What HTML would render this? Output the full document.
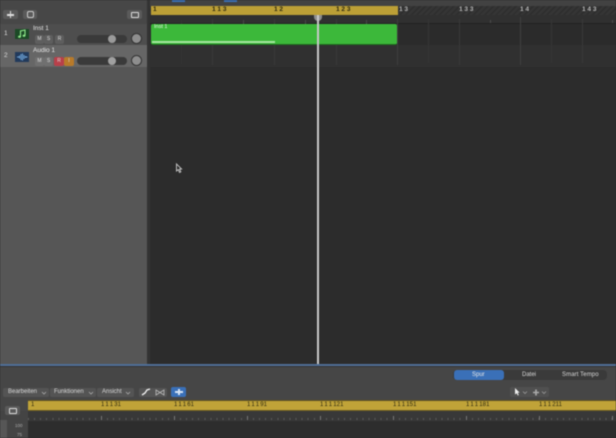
<!DOCTYPE html>
<html><head><meta charset="utf-8">
<style>
html,body{margin:0;padding:0;background:#2b2b2b}
#p{position:relative;width:616px;height:438px;overflow:hidden;background:#2c2c2c;font-family:"Liberation Sans",sans-serif;filter:blur(.45px)}
#p div{position:absolute;box-sizing:border-box}
.t{white-space:nowrap;line-height:1}
.rl{font-size:6.5px;color:#2e2a10;letter-spacing:.3px;word-spacing:-.6px;font-weight:bold}
.rd{font-size:6.5px;color:#b5b5b5;letter-spacing:.3px;word-spacing:-.6px;font-weight:bold}
.rb{font-size:6px;color:#2e2a10;letter-spacing:.1px;word-spacing:-.8px;top:402px}
.b{background:#5e5e5e;border-radius:2px;color:#ddd;font-size:5px;text-align:center;line-height:9px;height:9px}
.m{font-size:6px;color:#d8d8d8}
svg{position:absolute}
</style></head><body>
<div id="p">
<!-- left panel -->
<div style="left:0;top:0;width:147px;height:365px;background:#565656"></div>
<div style="left:0;top:0;width:147px;height:24px;background:#474747"></div>
<div style="left:0;top:24px;width:147px;height:21px;background:#4e4e4e"></div>
<div style="left:0;top:45px;width:147px;height:22px;background:#666"></div>
<div style="left:147px;top:0;width:3px;height:365px;background:#333"></div>
<!-- toolbar buttons -->
<div style="left:3px;top:10px;width:15px;height:9px;background:#5a5a5a;border-radius:2px"></div>
<div style="left:7px;top:14px;width:7px;height:1.5px;background:#ddd"></div>
<div style="left:9.8px;top:11px;width:1.5px;height:7px;background:#ddd"></div>
<div style="left:23px;top:10px;width:14px;height:9px;background:#5a5a5a;border-radius:2px"></div>
<div style="left:27px;top:11px;width:7px;height:7px;border:1px solid #ccc;border-radius:2px"></div>
<div style="left:127px;top:10px;width:15px;height:9px;background:#5a5a5a;border-radius:2px"></div>
<div style="left:131px;top:12px;width:8px;height:6px;border:1px solid #ddd;border-radius:1px"></div>
<!-- track 1 -->
<div class="t" style="left:4px;top:31px;font-size:6.5px;color:#ddd">1</div>
<div style="left:15px;top:29px;width:14px;height:10px;background:#1c4a26"></div>
<svg style="left:17px;top:29px" width="10" height="10" viewBox="0 0 10 10"><path d="M3.5 7.5 V2 L8 1 V6.5" stroke="#8fe88a" stroke-width="1.1" fill="none"/><ellipse cx="2.5" cy="7.7" rx="1.4" ry="1.1" fill="#8fe88a"/><ellipse cx="7" cy="6.7" rx="1.4" ry="1.1" fill="#8fe88a"/></svg>
<div class="t" style="left:33px;top:26px;font-size:6.5px;color:#e4e4e4">Inst 1</div>
<div class="b" style="left:35px;top:35px;width:9px">M</div>
<div class="b" style="left:44px;top:35px;width:9px">S</div>
<div class="b" style="left:55px;top:35px;width:9px">R</div>
<div style="left:77px;top:35px;width:50px;height:8px;background:#3a3a3a;border-radius:4px"></div>
<div style="left:108px;top:35px;width:8px;height:8px;background:#9a9a9a;border-radius:50%"></div>
<div style="left:131px;top:33px;width:11px;height:11px;background:#8e8e8e;border:1.5px solid #333;border-radius:50%"></div>
<!-- track 2 -->
<div class="t" style="left:4px;top:53px;font-size:6.5px;color:#ddd">2</div>
<div style="left:15px;top:52px;width:14px;height:10px;background:#223a5c"></div>
<svg style="left:16px;top:52px" width="12" height="10" viewBox="0 0 12 10"><path d="M1 5 H3 M3.5 3.5 V6.5 M5 2 V8 M6.5 1.5 V8.5 M8 3 V7 M9.5 4 V6 M10 5 H11.5" stroke="#6ea4d8" stroke-width="1" fill="none"/></svg>
<div class="t" style="left:33px;top:48px;font-size:6.5px;color:#e8e8e8">Audio 1</div>
<div class="b" style="left:35px;top:57px;width:9px;background:#707070">M</div>
<div class="b" style="left:44px;top:57px;width:9px;background:#707070">S</div>
<div class="b" style="left:54px;top:57px;width:10px;background:#b8404a">R</div>
<div class="b" style="left:64px;top:57px;width:10px;background:#b87a2a">I</div>
<div style="left:77px;top:57px;width:50px;height:8px;background:#3a3a3a;border-radius:4px"></div>
<div style="left:108px;top:57px;width:8px;height:8px;background:#a0a0a0;border-radius:50%"></div>
<div style="left:131px;top:55px;width:11px;height:11px;background:#8e8e8e;border:1.5px solid #333;border-radius:50%"></div>
<!-- top bits -->
<div style="left:150px;top:0;width:466px;height:6px;background:#424242"></div>
<div style="left:172px;top:0;width:13px;height:2px;background:#3b6fb5"></div>
<div style="left:224px;top:0;width:13px;height:2px;background:#3b6fb5"></div>
<!-- main ruler -->
<div style="left:150px;top:6px;width:466px;height:9px;background:repeating-linear-gradient(135deg,#363636 0 2px,#2f2f2f 2px 4px)"></div>
<div style="left:151px;top:6px;width:247px;height:9px;background:#bc9f36"></div>
<div class="t rl" style="left:153px;top:7px">1</div>
<div class="t rl" style="left:212px;top:7px">1 1 3</div>
<div class="t rl" style="left:274px;top:7px">1 2</div>
<div class="t rl" style="left:336px;top:7px">1 2 3</div>
<div class="t rd" style="left:399px;top:7px">1 3</div>
<div class="t rd" style="left:459px;top:7px">1 3 3</div>
<div class="t rd" style="left:520px;top:7px">1 4</div>
<div class="t rd" style="left:582px;top:7px">1 4 3</div>
<!-- tick strip -->
<div style="left:150px;top:15px;width:466px;height:8px;background:#303030"></div>
<div style="left:150px;top:23px;width:466px;height:1px;background:#222"></div>
<!-- rows -->
<div style="left:150px;top:24px;width:466px;height:21px;background:#2b2b2b"></div>
<div style="left:150px;top:45px;width:466px;height:22px;background:#303030"></div>
<div style="left:150px;top:67px;width:466px;height:298px;background:#2c2c2c"></div>
<!-- grid lines -->
<div style="left:212px;top:19px;width:1px;height:46px;background:#383838"></div>
<div style="left:274px;top:19px;width:1px;height:46px;background:#383838"></div>
<div style="left:336px;top:19px;width:1px;height:46px;background:#383838"></div>
<div style="left:397px;top:19px;width:1px;height:46px;background:#3e3e3e"></div>
<div style="left:428px;top:19px;width:1px;height:44px;background:#363636"></div>
<div style="left:459px;top:19px;width:1px;height:46px;background:#383838"></div>
<div style="left:520px;top:17px;width:1px;height:48px;background:#404040"></div>
<div style="left:551px;top:19px;width:1px;height:44px;background:#363636"></div>
<div style="left:582px;top:19px;width:1px;height:44px;background:#383838"></div>
<div style="left:181px;top:20px;width:1px;height:44px;background:#343434"></div>
<div style="left:243px;top:20px;width:1px;height:4px;background:#484848"></div>
<div style="left:305px;top:20px;width:1px;height:4px;background:#484848"></div>
<div style="left:366px;top:20px;width:1px;height:4px;background:#484848"></div>
<div style="left:490px;top:20px;width:1px;height:3px;background:#4c4c4c"></div>
<div style="left:612px;top:20px;width:1px;height:3px;background:#4c4c4c"></div>
<!-- region -->
<div style="left:151px;top:24px;width:246px;height:21px;background:#3cb83a;border-radius:2px;border-bottom:1px solid #1d6b1d"></div>
<div class="t" style="left:154px;top:25px;font-size:5.5px;color:#e2fadf">Inst 1</div>
<div style="left:152px;top:41px;width:123px;height:2px;background:#a5e59e"></div>
<!-- playhead -->
<div style="left:314px;top:15px;width:8px;height:6px;background:#8d8d8d;border-radius:0 0 4px 4px"></div>
<div style="left:317px;top:15px;width:2px;height:350px;background:#c8c8c8"></div>
<!-- cursor -->
<svg style="left:175px;top:163px" width="8" height="11" viewBox="0 0 8 11"><path d="M1.5 1 L1.5 8 L3.2 6.6 L4.6 9.4 L5.8 8.8 L4.5 6.2 L6.5 6 Z" fill="#222" stroke="#c0c0c0" stroke-width="1"/></svg>
<!-- bottom panel -->
<div style="left:0;top:365px;width:616px;height:73px;background:#464646"></div>
<div style="left:0;top:364px;width:616px;height:2px;background:#4f6e96"></div>
<div style="left:0;top:366px;width:616px;height:1px;background:#333"></div>
<!-- tabs -->
<div style="left:453px;top:370px;width:154px;height:10px;background:#3a3a3a;border-radius:4px"></div>
<div style="left:454px;top:370px;width:50px;height:10px;background:#3a70b8;border-radius:3px"></div>
<div class="t m" style="left:472px;top:372px;color:#e6e6e6">Spur</div>
<div class="t m" style="left:522px;top:372px">Datei</div>
<div class="t m" style="left:562px;top:372px;letter-spacing:.1px">Smart Tempo</div>
<!-- menus -->
<div style="left:3px;top:388px;width:46px;height:9px;background:#545454;border-radius:2px"></div>
<div style="left:50px;top:388px;width:46px;height:9px;background:#545454;border-radius:2px"></div>
<div style="left:97px;top:388px;width:37px;height:9px;background:#545454;border-radius:2px"></div>
<div class="t m" style="left:8px;top:389px">Bearbeiten</div>
<div class="t m" style="left:54px;top:389px">Funktionen</div>
<div class="t m" style="left:102px;top:389px">Ansicht</div>
<svg style="left:0;top:388px" width="140" height="9" viewBox="0 0 140 9"><path d="M42 4 L44 6 L46 4 M89 4 L91 6 L93 4 M126 4 L128 6 L130 4" stroke="#aaa" stroke-width=".8" fill="none"/></svg>
<div style="left:139px;top:388px;width:28px;height:9px;background:#555;border-radius:2px"></div>
<svg style="left:141px;top:388px" width="24" height="9" viewBox="0 0 24 9"><path d="M1 7 L4 5 L6 2 L9 1" stroke="#eee" stroke-width="1.4" fill="none"/><path d="M15 2 L15 7 L19 4.5 Z M23 2 L23 7 L19 4.5 Z" stroke="#bbb" stroke-width=".8" fill="none"/></svg>
<div style="left:171px;top:387px;width:15px;height:10px;background:#3a70b8;border-radius:2px"></div>
<div style="left:178px;top:389px;width:1.5px;height:6px;background:#d5e3f5"></div>
<div style="left:175px;top:391px;width:8px;height:1.5px;background:#d5e3f5"></div>
<!-- tool pickers -->
<div style="left:510px;top:387px;width:39px;height:10px;background:#505050;border-radius:2px"></div>
<svg style="left:514px;top:388px" width="7" height="8" viewBox="0 0 7 8"><path d="M1 0 L1 6.5 L2.6 5.3 L3.8 7.5 L4.8 7 L3.7 4.8 L5.6 4.6 Z" fill="#eee"/></svg>
<svg style="left:520px;top:388px" width="28" height="9" viewBox="0 0 28 9"><path d="M3 3.5 L5 5.5 L7 3.5 M22 3.5 L24 5.5 L26 3.5" stroke="#999" stroke-width=".8" fill="none"/><path d="M16 1.5 V7.5 M13 4.5 H19" stroke="#aaa" stroke-width="1.6" fill="none"/></svg>
<!-- bottom ruler -->
<div style="left:28px;top:400px;width:588px;height:11px;background:#c0a338;border-top:1px solid #5e5020;border-bottom:1px solid #6a5a22"></div>
<div class="t rb" style="left:31px">1</div>
<div class="t rb" style="left:101px">1 1 1 31</div>
<div class="t rb" style="left:174px">1 1 1 61</div>
<div class="t rb" style="left:247px">1 1 1 91</div>
<div class="t rb" style="left:320px">1 1 1 121</div>
<div class="t rb" style="left:393px">1 1 1 151</div>
<div class="t rb" style="left:466px">1 1 1 181</div>
<div class="t rb" style="left:539px">1 1 1 211</div>
<!-- bottom editor -->
<div style="left:28px;top:411px;width:588px;height:27px;background:#383838"></div>
<div style="left:28px;top:421px;width:588px;height:17px;background:#2d2d2d"></div>
<div style="left:0;top:411px;width:28px;height:27px;background:#444"></div>
<div style="left:0;top:420px;width:7px;height:18px;background:#565656"></div>
<div style="left:5px;top:406px;width:15px;height:9px;background:#5a5a5a;border-radius:2px"></div>
<div style="left:9px;top:408px;width:8px;height:6px;border:1px solid #ddd;border-radius:1px"></div>
<div class="t" style="left:15px;top:424px;font-size:4.5px;color:#aaa">100</div>
<div class="t" style="left:17px;top:433px;font-size:4.5px;color:#aaa">75</div>
<div style="left:28px;top:418px;width:588px;height:2px;background:repeating-linear-gradient(90deg,#5c5c5c 0 1px,transparent 1px 6.08px)"></div>
<div style="left:101px;top:416px;width:1px;height:4px;background:#777"></div>
<div style="left:174px;top:416px;width:1px;height:4px;background:#777"></div>
<div style="left:247px;top:416px;width:1px;height:4px;background:#777"></div>
<div style="left:320px;top:416px;width:1px;height:4px;background:#777"></div>
<div style="left:393px;top:416px;width:1px;height:4px;background:#777"></div>
<div style="left:466px;top:416px;width:1px;height:4px;background:#777"></div>
<div style="left:539px;top:416px;width:1px;height:4px;background:#777"></div>
<div style="left:612px;top:416px;width:1px;height:4px;background:#777"></div>
</div>
</body></html>
